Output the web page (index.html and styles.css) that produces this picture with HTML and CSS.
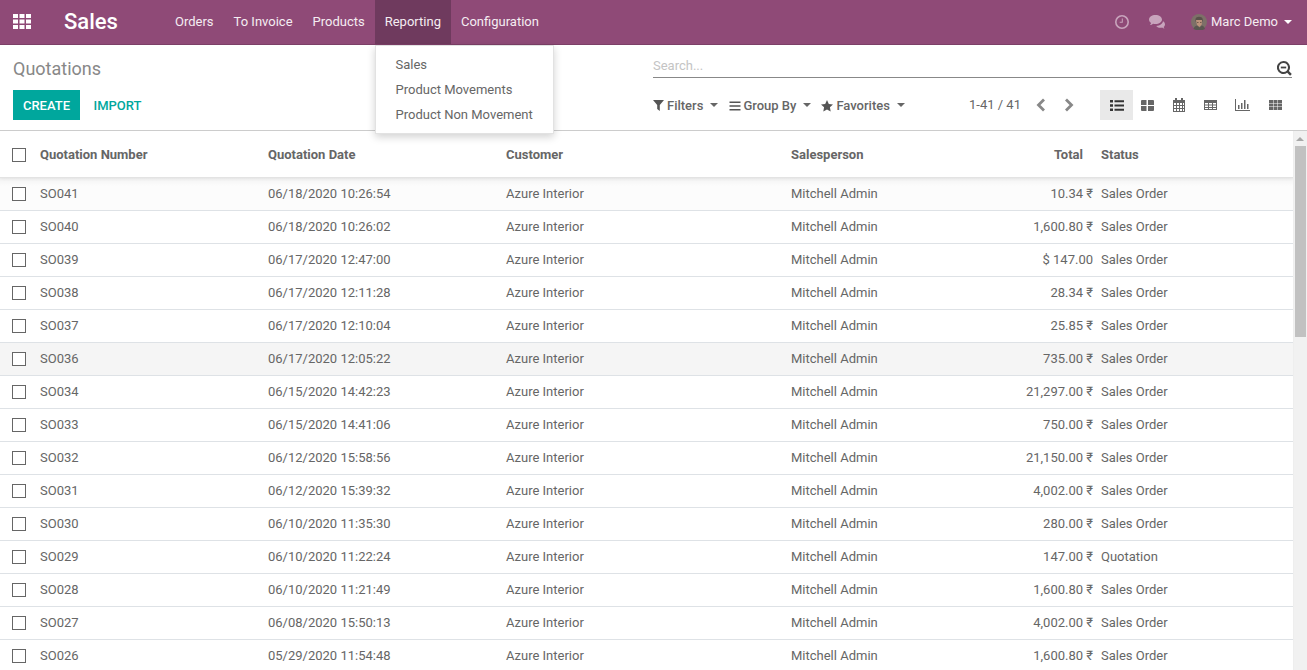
FILE: index.html
```html
<!DOCTYPE html>
<html lang="en">
<head>
<meta charset="utf-8">
<title>Sales</title>
<link rel="stylesheet" href="styles.css">
</head>
<body>
<header class="navbar">
  <svg class="apps" viewBox="0 0 18 15"><path d="M0 0h5v4H0zM6.500 0h5v4h-5zM13 0h5v4h-5zM0 5.500h5v4H0zM6.500 5.500h5v4h-5zM13 5.500h5v4h-5zM0 11h5v4H0zM6.500 11h5v4h-5zM13 11h5v4h-5z"/></svg>
  <div class="brand">Sales</div>
  <nav class="menu">
    <a>Orders</a><a>To Invoice</a><a>Products</a><a class="open">Reporting</a><a>Configuration</a>
  </nav>
  <div class="systray">
    <svg class="tray clock" viewBox="0 0 14 14"><path fill-rule="evenodd" d="M7 0a7 7 0 1 0 0 14A7 7 0 0 0 7 0zm0 1.600a5.400 5.400 0 1 1 0 10.800A5.400 5.400 0 0 1 7 1.600z"/><path d="M7.800 3.500v4.300H4.700V6.800h2.100V3.500z"/></svg>
    <svg class="tray chat" viewBox="0 0 16 14"><path d="M6.500 0C2.900 0 0 2 0 4.600c0 1.400.8 2.600 2.100 3.500-.2.800-.7 1.500-1.200 2 1.200-.1 2.300-.6 3.200-1.300.8.200 1.600.3 2.400.3 3.600 0 6.500-2 6.500-4.500S10.100 0 6.500 0z"/><path d="M14 5.700c0 2.900-3 5-6.800 5.200.9 1.200 2.600 1.900 4.400 1.900.5 0 1-.1 1.500-.2.700.5 1.500.9 2.400 1-.4-.5-.7-1-.9-1.600 1-.7 1.400-1.600 1.400-2.700 0-1.300-.8-2.500-2-3.100z"/></svg>
    <svg class="avatar" viewBox="0 0 16 16"><circle cx="8" cy="8" r="8" fill="#7d7068"/><path d="M4.500 5C5 2 11 2 11.700 5l.1 2.500-7.400 0z" fill="#5a514b"/><path d="M5 6h6l-.3 4.500L8.500 13 6 11z" fill="#bd937c"/><path d="M6 8h1.500v.8H6zM9 8h1.500v.8H9z" fill="#5b4a40"/><path d="M2.500 15c.5-2.500 2-3 3.500-3.500l2.500 2 2.500-2c1.500.5 2.500 1.500 3 3.500A8 8 0 0 1 8 16a8 8 0 0 1-5.500-1z" fill="#5a5650"/></svg>
    <span class="user">Marc Demo</span>
    <i class="caret light"></i>
  </div>
</header>

<ul class="dropdown">
  <li>Sales</li>
  <li>Product Movements</li>
  <li>Product Non Movement</li>
</ul>

<section class="panel">
  <div class="panel-left">
    <h1>Quotations</h1>
    <div class="buttons">
      <button class="create">CREATE</button>
      <button class="import">IMPORT</button>
    </div>
  </div>
  <div class="panel-right">
    <div class="search">
      <span class="placeholder">Search...</span>
      <svg class="search-icon" viewBox="0 0 15 15"><path fill-rule="evenodd" d="M6.500 0a6.500 6.500 0 1 0 3.700 11.800l2.900 2.900 1.700-1.700-2.900-2.900A6.500 6.500 0 0 0 6.500 0zm0 2a4.500 4.500 0 1 1 0 9 4.500 4.500 0 0 1 0-9z"/><path d="M3.800 5.600h5.400v1.800H3.800z"/></svg>
    </div>
    <div class="tools">
      <div class="filters">
        <span class="filter">
          <svg class="fi" viewBox="0 0 11 11"><path d="M0 0h11L6.800 5v6L4.200 9V5z"/></svg>Filters<i class="caret"></i>
        </span>
        <span class="filter">
          <svg class="fi wide" viewBox="0 0 11 10"><path d="M0 .5h11v1.600H0zM0 4.200h11v1.600H0zM0 7.900h11v1.600H0z" /></svg>Group By<i class="caret"></i>
        </span>
        <span class="filter">
          <svg class="fi star" viewBox="0 0 12 12"><path d="M6 0l1.800 3.900 4.200.5-3.100 2.900.8 4.200L6 9.400 2.300 11.500l.8-4.200L0 4.400l4.200-.5z"/></svg>Favorites<i class="caret"></i>
        </span>
      </div>
      <div class="pager">
        <span class="count">1-41 / 41</span>
        <svg class="chev" viewBox="0 0 10 14"><path d="M8 1.500L2.500 7 8 12.500" /></svg>
        <svg class="chev" viewBox="0 0 10 14"><path d="M2 1.500L7.500 7 2 12.500" /></svg>
      </div>
      <div class="views">
        <span class="view active"><svg width="14" height="11" viewBox="0 0 14 11"><path d="M0 0h3v2.500H0zM4.500.3H14v2H4.500zM0 4.200h3v2.500H0zM4.500 4.500H14v2H4.500zM0 8.400h3V11H0zM4.500 8.700H14v2H4.500z"/></svg></span>
        <span class="view"><svg width="13" height="11" viewBox="0 0 13 11"><path d="M0 1a1 1 0 0 1 1-1h4.500v5H0zM7 0h5a1 1 0 0 1 1 1v4H7zM0 6h5.500v5H1a1 1 0 0 1-1-1zM7 6h6v4a1 1 0 0 1-1 1H7z"/></svg></span>
        <span class="view"><svg width="12" height="14" viewBox="0 0 12 14"><path fill-rule="evenodd" d="M2 0h2v2h4V0h2v2h2v12H0V2h2zM1 5v2h2V5zm3 0v2h2V5zm3 0v2h2V5zm3 0v2h1V5zM1 8v2h2V8zm3 0v2h2V8zm3 0v2h2V8zm3 0v2h1V8zm-9 3v2h2v-2zm3 0v2h2v-2zm3 0v2h2v-2zm3 0v2h1v-2z"/></svg></span>
        <span class="view table"><svg width="13" height="10" viewBox="0 0 13 10"><path fill-rule="evenodd" d="M0 0h13v10H0zM1 3v1.500h3V3zm4 0v1.500h3V3zm4 0v1.500h3V3zM1 5.500V7h3V5.500zm4 0V7h3V5.500zm4 0V7h3V5.500zM1 8v1h3V8zm4 0v1h3V8zm4 0v1h3V8z"/></svg></span>
        <span class="view graph"><svg width="15" height="12" viewBox="0 0 15 12"><path d="M0 0h1v11h14v1H0zM3 6h1.500v4H3zM6 4h1.500v6H6zM9 1h1.500v9H9zM12 5h1.500v5H12z"/></svg></span>
        <span class="view pivot"><svg width="13" height="10" viewBox="0 0 13 10"><path d="M0 0h4v3H0zM4.500 0h4v3h-4zM9 0h4v3H9zM0 3.500h4v3H0zM4.500 3.500h4v3h-4zM9 3.500h4v3H9zM0 7h4v3H0zM4.500 7h4v3h-4zM9 7h4v3H9z"/></svg></span>
      </div>
    </div>
  </div>
</section>

<main class="content">
  <div class="list">
    <div class="row head">
      <span class="check"><i class="box"></i></span>
      <span>Quotation Number</span><span>Quotation Date</span><span>Customer</span><span>Salesperson</span><span class="total">Total</span><span class="status">Status</span>
    </div>
    <div class="row first"><span class="check"><i class="box"></i></span><span>SO041</span><span>06/18/2020 10:26:54</span><span>Azure Interior</span><span>Mitchell Admin</span><span class="amt">10.34 ₹</span><span class="status">Sales Order</span></div>
    <div class="row"><span class="check"><i class="box"></i></span><span>SO040</span><span>06/18/2020 10:26:02</span><span>Azure Interior</span><span>Mitchell Admin</span><span class="amt">1,600.80 ₹</span><span class="status">Sales Order</span></div>
    <div class="row"><span class="check"><i class="box"></i></span><span>SO039</span><span>06/17/2020 12:47:00</span><span>Azure Interior</span><span>Mitchell Admin</span><span class="amt">$ 147.00</span><span class="status">Sales Order</span></div>
    <div class="row"><span class="check"><i class="box"></i></span><span>SO038</span><span>06/17/2020 12:11:28</span><span>Azure Interior</span><span>Mitchell Admin</span><span class="amt">28.34 ₹</span><span class="status">Sales Order</span></div>
    <div class="row"><span class="check"><i class="box"></i></span><span>SO037</span><span>06/17/2020 12:10:04</span><span>Azure Interior</span><span>Mitchell Admin</span><span class="amt">25.85 ₹</span><span class="status">Sales Order</span></div>
    <div class="row hover"><span class="check"><i class="box"></i></span><span>SO036</span><span>06/17/2020 12:05:22</span><span>Azure Interior</span><span>Mitchell Admin</span><span class="amt">735.00 ₹</span><span class="status">Sales Order</span></div>
    <div class="row"><span class="check"><i class="box"></i></span><span>SO034</span><span>06/15/2020 14:42:23</span><span>Azure Interior</span><span>Mitchell Admin</span><span class="amt">21,297.00 ₹</span><span class="status">Sales Order</span></div>
    <div class="row"><span class="check"><i class="box"></i></span><span>SO033</span><span>06/15/2020 14:41:06</span><span>Azure Interior</span><span>Mitchell Admin</span><span class="amt">750.00 ₹</span><span class="status">Sales Order</span></div>
    <div class="row"><span class="check"><i class="box"></i></span><span>SO032</span><span>06/12/2020 15:58:56</span><span>Azure Interior</span><span>Mitchell Admin</span><span class="amt">21,150.00 ₹</span><span class="status">Sales Order</span></div>
    <div class="row"><span class="check"><i class="box"></i></span><span>SO031</span><span>06/12/2020 15:39:32</span><span>Azure Interior</span><span>Mitchell Admin</span><span class="amt">4,002.00 ₹</span><span class="status">Sales Order</span></div>
    <div class="row"><span class="check"><i class="box"></i></span><span>SO030</span><span>06/10/2020 11:35:30</span><span>Azure Interior</span><span>Mitchell Admin</span><span class="amt">280.00 ₹</span><span class="status">Sales Order</span></div>
    <div class="row"><span class="check"><i class="box"></i></span><span>SO029</span><span>06/10/2020 11:22:24</span><span>Azure Interior</span><span>Mitchell Admin</span><span class="amt">147.00 ₹</span><span class="status">Quotation</span></div>
    <div class="row"><span class="check"><i class="box"></i></span><span>SO028</span><span>06/10/2020 11:21:49</span><span>Azure Interior</span><span>Mitchell Admin</span><span class="amt">1,600.80 ₹</span><span class="status">Sales Order</span></div>
    <div class="row"><span class="check"><i class="box"></i></span><span>SO027</span><span>06/08/2020 15:50:13</span><span>Azure Interior</span><span>Mitchell Admin</span><span class="amt">4,002.00 ₹</span><span class="status">Sales Order</span></div>
    <div class="row"><span class="check"><i class="box"></i></span><span>SO026</span><span>05/29/2020 11:54:48</span><span>Azure Interior</span><span>Mitchell Admin</span><span class="amt">1,600.80 ₹</span><span class="status">Sales Order</span></div>
  </div>
  <div class="scrollbar">
    <i class="arrow"></i>
    <div class="thumb"></div>
  </div>
</main>
</body>
</html>
```
FILE: styles.css
```css
* { box-sizing: border-box; }
html, body { margin: 0; height: 100%; overflow: hidden; }
body { font: 13px/1.5 Roboto, "Noto Sans", sans-serif; color: #666; background: #fff; height: 670px; display: flex; flex-direction: column; position: relative; }

.navbar { height: 45px; flex: none; background: #8f4a77; border-bottom: 1px solid #7c3f67; display: flex; align-items: center; color: #fff; }
.apps { width: 18px; height: 15px; margin: 0 0 1px 13px; fill: #fff; }
.brand { font-size: 22px; font-weight: 500; margin-left: 33px; width: 101px; line-height: 44px; }
.menu { display: flex; height: 44px; }
.menu a { padding: 0 10px; line-height: 43px; color: #f5edf2; }
.menu a.open { background: #6f3a5e; }
.systray { margin-left: auto; display: flex; align-items: center; padding-right: 15px; }
.tray { fill: #c8a4bc; }
.clock { width: 14px; height: 14px; margin-right: 20px; }
.chat { width: 16px; height: 14px; margin-right: 26px; }
.avatar { width: 16px; height: 16px; margin-right: 4px; }
.user { color: #f5edf2; }
.caret { display: inline-block; width: 0; height: 0; border: 4px solid transparent; border-top-color: #666; border-bottom: 0; }
.caret.light { border-top-color: #fff; margin-left: 6px; }

.dropdown { position: absolute; left: 375px; top: 45px; width: 179px; height: 89px; margin: 0; padding: 7px 0 0; list-style: none; background: #fff; border: 1px solid #e2e2e2; box-shadow: 0 3px 8px rgba(0,0,0,.18); z-index: 5; }
.dropdown li { padding-left: 19.500px; height: 25px; line-height: 24px; color: #666; white-space: nowrap; }

.panel { height: 86px; flex: none; border-bottom: 1px solid #ccc; display: flex; justify-content: space-between; padding: 0 15px 0 13px; }
.panel-left h1 { margin: 10px 0 0; font-size: 18px; font-weight: 400; line-height: 27px; color: #888; }
.buttons { display: flex; margin-top: 8px; }
.buttons button { font: 500 13px/28px Roboto, sans-serif; border: 0; height: 30px; padding: 1px 0 0; }
.create { width: 67px; background: #00a79d; color: #fff; }
.import { background: none; color: #00a79d; margin-left: 13.500px; }
.panel-right { width: 639px; }
.search { height: 33px; padding: 12px 0 0; border-bottom: 1px solid #888; display: flex; justify-content: space-between; align-items: flex-start; }
.placeholder { color: #c4c4c4; line-height: 20px; margin-top: -1px; }
.search-icon { width: 15px; height: 15px; fill: #444; margin-top: 4px; }
.tools { display: flex; align-items: center; margin-top: 12px; height: 30px; }
.filters { display: flex; width: 316px; }
.filter { display: flex; align-items: center; white-space: nowrap; color: #666; font-weight: 500; line-height: 22px; margin-top: 1px; }
.filter:nth-child(1) { margin-right: 11px; }
.filter:nth-child(2) { margin-right: 10px; }
.fi { width: 11px; height: 11px; fill: #555; margin-right: 3px; }
.fi.wide { width: 12px; height: 10px; margin-right: 2px; }
.fi.star { width: 12px; height: 12px; margin-right: 3px; }
.filter .caret { margin: -2px 0 0 7px; }
.pager { display: flex; align-items: center; width: 131px; }
.count { color: #666; width: 67px; white-space: nowrap; }
.chev { width: 10px; height: 14px; fill: none; stroke: #888; stroke-width: 2.800; margin-right: 18px; }
.views { display: flex; }
.view { width: 33px; height: 30px; display: flex; align-items: center; justify-content: center; fill: #666; margin-right: -2px; }
.view.active { background: #e9e9e9; fill: #333; }
.view.table { margin-left: 1px; margin-right: -3px; }
.view.graph { margin-left: 2px; }
.view.pivot { margin-left: 2px; }

.content { flex: 1; display: flex; min-height: 0; }
.list { width: 1293px; overflow: hidden; }
.row { display: grid; grid-template-columns: 40px 228px 238px 285px 160px 142px 1fr; height: 33px; align-items: center; border-bottom: 1px solid #dee2e6; white-space: nowrap; }
.row.head { height: 47px; padding-top: 1px; font-weight: 700; border-bottom: 1px solid #e3e3e3; box-shadow: 0 1px 3px rgba(0,0,0,.07); position: relative; }
.row.first { background: linear-gradient(#f3f3f3, #fcfcfc 8px); }
.row.hover { background: #f5f5f5; }
.status { padding-left: 8px; }
.check { padding-left: 12px; display: flex; }
.box { width: 14px; height: 14px; border: 1px solid #666; background: #fff; display: block; }
.total { text-align: right; padding-right: 10px; }
.amt { text-align: right; }
.scrollbar { width: 14px; background: #f1f1f1; position: relative; border-left: 1px solid #eee; }
.arrow { position: absolute; left: 2px; top: 6px; width: 0; height: 0; border: 4px solid transparent; border-top: 0; border-bottom: 4px solid #a8a8a8; }
.thumb { position: absolute; left: 1px; right: 1px; top: 15px; height: 191px; background: #c1c1c1; }
```
